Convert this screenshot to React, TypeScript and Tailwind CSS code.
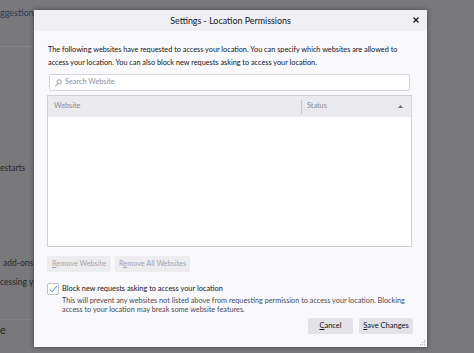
import React from "react";

function SearchIcon() {
  return (
    <svg width="7" height="8" viewBox="0 0 7 8" fill="none" stroke="#8f8f9d" strokeWidth="0.9">
      <circle cx="4.2" cy="2.9" r="2.2" />
      <path d="M2.6 4.5 L0.6 7.3" strokeLinecap="round" />
    </svg>
  );
}

export default function App() {
  return (
    <div
      className="relative w-[474px] h-[353px] overflow-hidden bg-[#79797b] text-[7.3px] whitespace-nowrap"
      style={{ fontFamily: 'Lato, "Noto Sans", sans-serif' }}
    >
      {/* dimmed page behind */}
      <div className="flex flex-col w-[34px] text-[#27272c]">
        <div className="mt-[7px] h-[12px] leading-[12px] text-[9px] text-[#2f3a55]">ggestions</div>
        <div className="mt-[27px] h-px bg-[#858587] w-[34px]" />
        <div className="mt-[115px] h-[12px] leading-[12px] text-[8.5px]">estarts</div>
        <div className="mt-[83px] h-[12px] leading-[12px] text-[8.5px] pl-[3px]">add-ons</div>
        <div className="mt-[7px] h-[12px] leading-[12px] text-[8.5px]">cessing y</div>
        <div className="mt-[31px] h-px bg-[#828284] w-[34px]" />
        <div className="mt-[3px] h-[14px] leading-[14px] text-[11px]">e</div>
      </div>

      {/* dialog */}
      <div className="absolute left-[34px] top-[10px] w-[393px] h-[337px] bg-[#f9f9fb] flex flex-col shadow-[0_0_5px_rgba(0,0,0,0.45)] text-[#15141a]">
        <div className="relative h-[21px] bg-[#f0f0f4] flex items-center justify-center">
          <span className="text-[8.9px] text-[#15141a]">Settings - Location Permissions</span>
          <svg className="absolute right-[8px] top-[7px]" width="6" height="6" viewBox="0 0 6 6" stroke="#15141a" strokeWidth="1.2">
            <path d="M0.5 0.5 L5.5 5.5 M5.5 0.5 L0.5 5.5" />
          </svg>
        </div>

        <div className="flex flex-col pl-[13px] pr-[15px] pt-[13px]">
          <p className="leading-[12.5px] pl-[1px]">
            The following websites have requested to access your location. You can specify which websites are allowed to
            <br />
            access your location. You can also block new requests asking to access your location.
          </p>

          <div className="mt-[5px] mx-[2px] h-[17px] border border-[#d4d4dc] bg-white rounded-[2px] flex items-center pl-[5px] gap-[3px]">
            <SearchIcon />
            <span className="text-[#8f8f9d]">Search Website</span>
          </div>

          <div className="mt-[4px] h-[152px] border border-[#d0d0d8] bg-white flex flex-col">
            <div className="h-[21px] bg-[#ebebef] flex items-center text-[#8a8a94]">
              <div className="w-[253px] pl-[6px]">Website</div>
              <div className="w-px h-[14px] bg-[#c6c6cc]" />
              <div className="flex-1 flex items-center justify-between pl-[5px] pr-[8px]">
                <span>Status</span>
                <svg width="5" height="3" viewBox="0 0 5 3" fill="#6d6d75">
                  <path d="M0 3 L2.5 0 L5 3 Z" />
                </svg>
              </div>
            </div>
          </div>

          <div className="mt-[9px] flex gap-[4px] text-[#a3a3ab]">
            <div className="w-[64px] h-[16px] bg-[#ededf0] rounded-[2px] flex items-center justify-center">
              <span><span className="underline">R</span>emove Website</span>
            </div>
            <div className="w-[75px] h-[16px] bg-[#ededf0] rounded-[2px] flex items-center justify-center">
              <span>R<span className="underline">e</span>move All Websites</span>
            </div>
          </div>

          <div className="mt-[11px] flex items-center gap-[3px] h-[12px]">
            <div className="w-[12px] h-[12px] border border-[#b9c3cc] bg-white rounded-[2px] flex items-center justify-center">
              <svg width="9" height="8" viewBox="0 0 9 8" fill="none" stroke="#3b8bc2" strokeWidth="1">
                <path d="M1 4.6 L3.2 6.8 L8 0.8" />
              </svg>
            </div>
            <span className="text-[7.4px]">Block new requests asking to access your location</span>
          </div>

          <p className="mt-[2px] ml-[15px] leading-[8.5px] text-[#4a4a55]">
            This will prevent any websites not listed above from requesting permission to access your location. Blocking
            <br />
            access to your location may break some website features.
          </p>

          <div className="mt-[4px] flex justify-end gap-[6px] -mr-[1px] text-[7.5px]">
            <div className="w-[45px] h-[16px] bg-[#e2e2e7] rounded-[2px] flex items-center justify-center">
              <span><span className="underline">C</span>ancel</span>
            </div>
            <div className="w-[54px] h-[16px] bg-[#e2e2e7] rounded-[2px] flex items-center justify-center">
              <span><span className="underline">S</span>ave Changes</span>
            </div>
          </div>
        </div>

        <svg className="absolute right-[2px] bottom-[2px]" width="5" height="5" viewBox="0 0 5 5" fill="#b0b0b6">
          <rect x="4" y="0" width="1" height="1" />
          <rect x="2" y="2" width="1" height="1" />
          <rect x="4" y="2" width="1" height="1" />
          <rect x="0" y="4" width="1" height="1" />
          <rect x="2" y="4" width="1" height="1" />
          <rect x="4" y="4" width="1" height="1" />
        </svg>
      </div>
    </div>
  );
}
